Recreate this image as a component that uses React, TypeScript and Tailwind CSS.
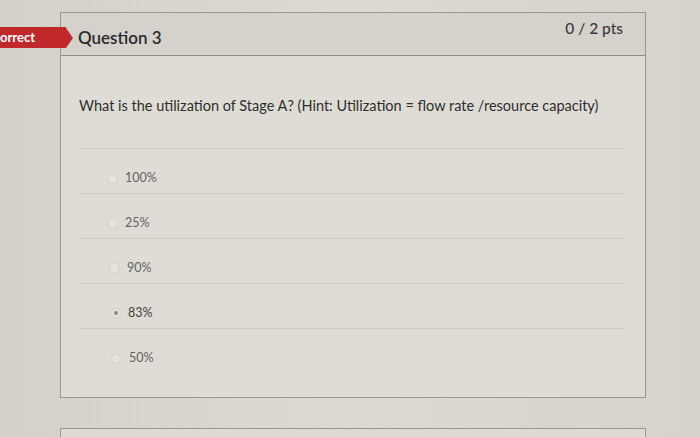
import React from 'react';

type Answer = {
  label: string;
  selected?: boolean;
  indent: number;
};

const ANSWERS: Answer[] = [
  { label: '100%', indent: 46 },
  { label: '25%', indent: 46 },
  { label: '90%', indent: 48 },
  { label: '83%', selected: true, indent: 49 },
  { label: '50%', indent: 50 },
];

function Radio({ selected }: { selected?: boolean }) {
  return (
    <span className="flex h-[11px] w-[11px] items-center justify-center rounded-full border border-[#d2cfc8] bg-[#e6e3dc]">
      {selected && <span className="h-[4px] w-[4px] rounded-full bg-[#8a8883]" />}
    </span>
  );
}

export default function App() {
  return (
    <div
      className="relative h-[437px] w-[700px] overflow-hidden bg-gradient-to-r from-[#d4d1ca] via-[#dddad3] to-[#d6d3cc]"
      style={{ fontFamily: 'Lato, "Open Sans", sans-serif' }}
    >
      {/* result badge, overlapping the card edge */}
      <div className="absolute left-0 top-[27px] flex h-[21px] items-center">
        <div className="flex h-full w-[66px] items-center overflow-hidden bg-[#c0282b]">
          <span className="text-[13px] font-bold leading-none text-white">orrect</span>
        </div>
        <div className="h-0 w-0 border-y-[10.5px] border-l-[7px] border-y-transparent border-l-[#c0282b]" />
      </div>

      {/* question card */}
      <div className="ml-[60px] mt-[12px] w-[586px] border border-[#9a9791] bg-[#dfdcd5]">
        <div className="flex h-[43px] items-start justify-between border-b border-[#8f8c86] bg-[#d5d2cb] pl-[17px] pr-[22px]">
          <h2 className="mt-[16px] text-[17px] font-semibold leading-none text-[#2b2b2b]">Question 3</h2>
          <span className="mt-[8px] text-[15.5px] font-medium leading-none text-[#3a3a3a]">0 / 2 pts</span>
        </div>

        <div className="px-[18px] pb-[24px] pt-[41px]">
          <p className="text-[14.5px] leading-[18px] text-[#2e2e2e]">
            What is the utilization of Stage A? (Hint: Utilization = flow rate /resource capacity)
          </p>

          <div className="mt-[33px] pr-[2px]">
            {ANSWERS.map((a) => (
              <div
                key={a.label}
                className="flex h-[45px] items-center gap-[7px] pt-[14px] border-t border-[#cfccc5]"
                style={{ paddingLeft: a.indent - 18 }}
              >
                <Radio selected={a.selected} />
                <span className={`text-[12.5px] ${a.selected ? 'text-[#3f3f3f]' : 'text-[#626262]'}`}>{a.label}</span>
              </div>
            ))}
          </div>
        </div>
      </div>

      {/* next card peeking at the bottom */}
      <div className="ml-[60px] mt-[30px] h-[20px] w-[586px] border border-[#9a9791] bg-[#dddad3]" />
    </div>
  );
}
